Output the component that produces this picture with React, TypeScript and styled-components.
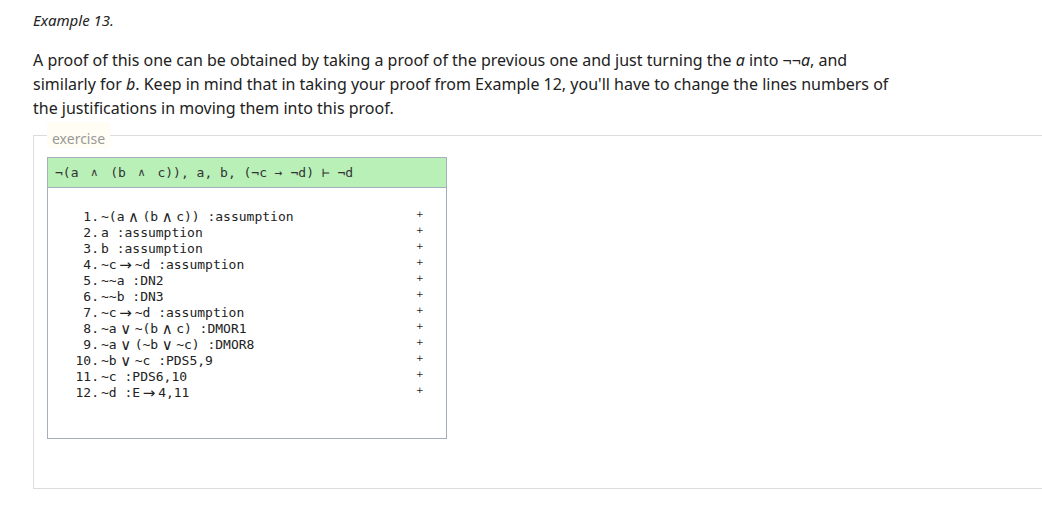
import React from 'react';
import styled, { createGlobalStyle } from 'styled-components';

const GlobalStyle = createGlobalStyle`
    html, body {
        margin: 0;
        padding: 0;
        background: #fff;
        overflow: hidden;
    }
    body {
        font-family: "Noto Sans", "Open Sans", sans-serif;
        color: #222;
    }
`

const Page = styled.div`
    padding: 8px 0 0 33px;
    width: 1042px;
    box-sizing: border-box;
`

const Title = styled.p`
    margin: 0 0 16px;
    font-size: 15px;
    line-height: 24px;
    font-style: italic;
    color: #222;
`

const Para = styled.p`
    margin: 0 0 2px;
    font-size: 16px;
    line-height: 24px;
    white-space: nowrap;
    color: #222;
    & i { font-style: italic; }
`

const Exercise = styled.fieldset`
    margin: 0 -40px 0 0;
    padding: 9px 13px 49px;
    border: 1px solid #dcdcdc;
    border-right: none;
    min-width: 0;
`

const Legend = styled.legend`
    margin-left: 0;
    padding: 8px 5px 0;
    font-size: 14px;
    line-height: 18px;
    color: #999;
    background: #fffdf4;
`

const Goal = styled.div`
    width: 400px;
    height: 31px;
    display: flex;
    align-items: center;
    padding-left: 7px;
    box-sizing: border-box;
    background: #b8f0b8;
    border: 1px solid #a3b0bc;
    font-family: "DejaVu Sans Mono", monospace;
    font-size: 13px;
    color: #333;
    white-space: pre;
`

const Proof = styled.div`
    width: 400px;
    height: 251px;
    box-sizing: border-box;
    border: 1px solid #a3b0bc;
    border-top: none;
    padding: 21px 0 0 0;
`

const Line = styled.div`
    display: grid;
    grid-template-columns: 52px 1fr 30px;
    height: 16px;
    align-items: center;
    font-family: "DejaVu Sans Mono", monospace;
    font-size: 13px;
    line-height: 16px;
    color: #222;
    white-space: pre;
`

const Num = styled.span`
    text-align: right;
    padding-right: 1px;
`

const Body = styled.span`
    padding-left: 1px;
`

// connectives render wider than the mono cells in the original
const Sym = styled.span<{ $w: number; $size: number }>`
    display: inline-block;
    width: ${p => p.$w}px;
    text-align: center;
    font-family: "DejaVu Sans", sans-serif;
    font-size: ${p => p.$size}px;
    line-height: 16px;
    vertical-align: top;
    overflow: hidden;
`

const Plus = styled.span`
    font-family: "DejaVu Sans", sans-serif;
    font-size: 9px;
    line-height: 9px;
    align-self: start;
    padding-top: 1px;
    color: #222;
`

const lines = [
    '~(a\u2227(b\u2227c)) :assumption',
    'a :assumption',
    'b :assumption',
    '~c\u2192~d :assumption',
    '~~a :DN2',
    '~~b :DN3',
    '~c\u2192~d :assumption',
    '~a\u2228~(b\u2227c) :DMOR1',
    '~a\u2228(~b\u2228~c) :DMOR8',
    '~b\u2228~c :PDS5,9',
    '~c :PDS6,10',
    '~d :E\u21924,11',
];

const wide = /([\u2227\u2228\u2192])/;

const renderProof = (s: string) =>
    s.split(wide).map((part, i) =>
        wide.test(part)
            ? <Sym key={i} $w={18} $size={15}>{part}</Sym>
            : <React.Fragment key={i}>{part}</React.Fragment>
    );

const goalParts = ['¬(a ', '∧', ' (b ', '∧', ' c)), a, b, (¬c → ¬d) ⊢ ¬d'];

export default function App() {
    return (
        <Page>
            <GlobalStyle />
            <Title>Example 13.</Title>
            <Para>
                A proof of this one can be obtained by taking a proof of the previous one and just turning the <i>a</i> into ¬¬<i>a</i>, and
                <br />
                similarly for <i>b</i>. Keep in mind that in taking your proof from Example 12, you'll have to change the lines numbers of
                <br />
                the justifications in moving them into this proof.
            </Para>
            <Exercise>
                <Legend>exercise</Legend>
                <Goal>
                    {goalParts.map((p, i) =>
                        p === '∧'
                            ? <Sym key={i} $w={16} $size={11}>{p}</Sym>
                            : <React.Fragment key={i}>{p}</React.Fragment>
                    )}
                </Goal>
                <Proof>
                    {lines.map((l, i) => (
                        <Line key={i}>
                            <Num>{i + 1}.</Num>
                            <Body>{renderProof(l)}</Body>
                            <Plus>+</Plus>
                        </Line>
                    ))}
                </Proof>
            </Exercise>
        </Page>
    );
}
